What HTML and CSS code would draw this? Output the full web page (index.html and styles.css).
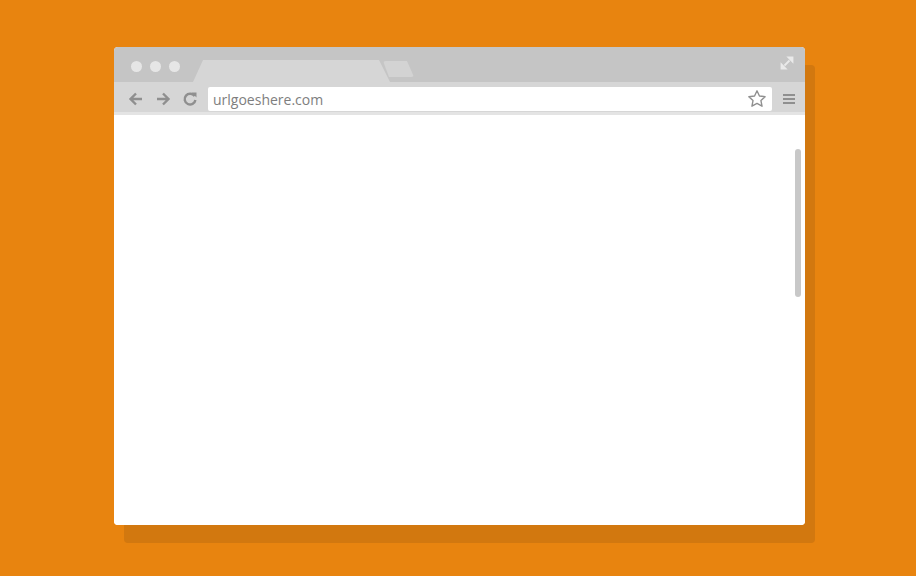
FILE: index.html
```html
<!DOCTYPE html>
<html>
<head>
<meta charset="utf-8">
<link rel="stylesheet" href="styles.css">
</head>
<body>
<div class="window">
  <div class="titlebar">
    <div class="dots"><span class="dot"></span><span class="dot"></span><span class="dot"></span></div>
    <div class="tabs">
      <div class="tab"></div>
      <div class="newtab"></div>
    </div>
    <svg class="maximize" width="16" height="16" viewBox="0 0 16 16">
      <path d="M9.5 2.5h4v4z M6.5 13.5h-4v-4z M10.5 5.5L5.5 10.5" fill="#eaeaea" stroke="#eaeaea" stroke-width="1.8"/>
    </svg>
  </div>
  <div class="toolbar">
    <svg class="nav" width="18" height="18" viewBox="0 0 18 18">
      <path d="M15 9H4 M9 3.5L3.5 9L9 14.5" fill="none" stroke="#8f8f8f" stroke-width="2.4"/>
    </svg>
    <svg class="nav" width="18" height="18" viewBox="0 0 18 18">
      <path d="M3 9H14 M9 3.5L14.5 9L9 14.5" fill="none" stroke="#8f8f8f" stroke-width="2.4"/>
    </svg>
    <svg class="nav" width="18" height="18" viewBox="0 0 18 18">
      <path d="M13.6 6.2A5.4 5.4 0 1 0 14.4 10" fill="none" stroke="#8f8f8f" stroke-width="2.4"/>
      <path d="M10.5 2.5H15.5V7.5z" fill="#8f8f8f"/>
    </svg>
    <div class="omnibox">
      <span class="url">urlgoeshere.com</span>
      <svg class="star" width="20" height="20" viewBox="0 0 20 20">
        <path d="M10 1.8l2.45 5.2 5.65.7-4.15 3.9 1.05 5.6L10 14.45 4.95 17.2 6 11.6 1.85 7.7l5.7-.7z" fill="none" stroke="#909090" stroke-width="1.4" stroke-linejoin="round"/>
      </svg>
    </div>
    <svg class="menu" width="14" height="14" viewBox="0 0 14 14">
      <path d="M1 3h12 M1 7h12 M1 11h12" stroke="#8f8f8f" stroke-width="2"/>
    </svg>
  </div>
  <div class="content">
    <div class="scrollbar"></div>
  </div>
</div>
</body>
</html>
```

FILE: styles.css
```css
html, body {
  margin: 0;
  padding: 0;
}
body {
  background: #e8840f;
  width: 916px;
  height: 576px;
  overflow: hidden;
  padding: 47px 0 0 114px;
  box-sizing: border-box;
}
.window {
  width: 691px;
  height: 478px;
  border-radius: 4px;
  background: #ffffff;
  box-shadow: 10px 18px 0 0 #d2780f;
  overflow: hidden;
  display: flex;
  flex-direction: column;
}
.titlebar {
  height: 35px;
  background: #c5c5c5;
  display: flex;
  align-items: flex-end;
  position: relative;
}
.dots {
  display: flex;
  gap: 8px;
  align-self: flex-start;
  margin: 14px 0 0 17px;
}
.dot {
  width: 11px;
  height: 11px;
  border-radius: 50%;
  background: #e6e6e6;
}
.tabs {
  display: flex;
  align-items: flex-end;
  margin-left: 13px;
}
.tab {
  width: 197px;
  height: 22px;
  background: #d6d6d6;
  clip-path: polygon(0 100%, 10px 0, 186px 0, 197px 100%);
}
.newtab {
  width: 31px;
  height: 16px;
  margin: 0 0 5px -7px;
  background: #d3d3d3;
  border-radius: 3px;
  clip-path: polygon(0 0, 24px 0, 31px 100%, 6px 100%);
}
.maximize {
  position: absolute;
  right: 10px;
  top: 8px;
}
.toolbar {
  height: 26px;
  padding: 4px 0 0 13px;
  background: #d6d6d6;
  display: flex;
  align-items: center;
  border-bottom: 3px solid #e4e4e4;
}
.nav {
  margin-right: 9px;
}
.omnibox {
  width: 564px;
  height: 24px;
  background: #ffffff;
  border-radius: 2px;
  display: flex;
  align-items: center;
  justify-content: space-between;
  padding: 1px 5px 0 5px;
  box-sizing: border-box;
}
.url {
  font-family: "Open Sans", "Liberation Sans", sans-serif;
  font-size: 14px;
  color: #7e7e7e;
  letter-spacing: 0px;
}
.star {
  display: block;
  margin-top: -1px;
}
.menu {
  margin-left: 10px;
}
.content {
  flex: 1;
  background: #ffffff;
  position: relative;
}
.scrollbar {
  position: absolute;
  right: 4px;
  top: 34px;
  width: 6px;
  height: 148px;
  border-radius: 3px;
  background: #c8c8c8;
}
```
